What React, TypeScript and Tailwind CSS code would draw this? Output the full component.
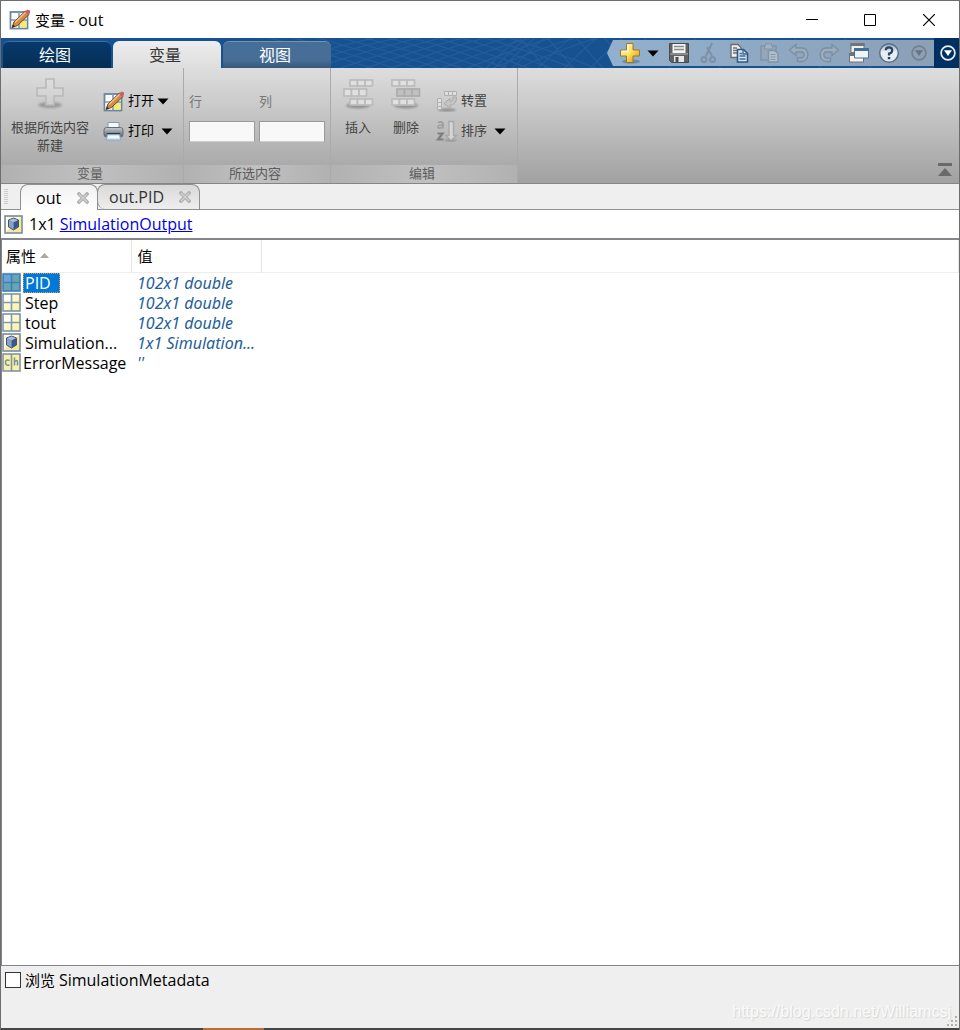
import React from "react";

const GridIcon = ({ selected = false }: { selected?: boolean }) => (
  <svg width="19" height="19" viewBox="0 0 19 19" aria-hidden="true">
    <defs>
      <linearGradient id="pane" x2="1" y2="1"><stop stopColor="#fffef6" /><stop offset="1" stopColor="#fbf19a" /></linearGradient>
    </defs>
    <rect x="1" y="1" width="17" height="17" fill={selected ? "#69a3b4" : "url(#pane)"} stroke={selected ? "#3c80b4" : "#7b94ad"} strokeWidth="1.600" />
    <rect x="2" y="2" width="7" height="7" fill={selected ? "#69a5d7" : "#fffef4"} />
    <path d="M9.500 1v17M1 9.500h17" stroke={selected ? "#3c80b4" : "#8299b0"} strokeWidth="1.600" />
  </svg>
);

const CubeIcon = () => (
  <svg width="19" height="19" viewBox="0 0 19 19" aria-hidden="true">
    <rect x="1" y="1" width="17" height="17" fill="#f7e999" stroke="#778da7" strokeWidth="1.600" />
    <path d="M2 17V2h15z" fill="#fffbdc" />
    <path d="M9.500 3l5 2v7l-5 3-5-3V5z" fill="#5f7fab" stroke="#3d5477" />
    <path d="M5 5.300l4.500-1.800L14 5.300 9.500 7.500z" fill="#a9bfdb" />
    <path d="M9.500 7.500L14 5.300v6.500l-4.500 2.700z" fill="#3b5988" />
    <path d="M5 5.600l4.500 2v6.900L5 11.800z" fill="#86a2c8" />
  </svg>
);

const CharIcon = () => (
  <svg width="19" height="19" viewBox="0 0 19 19" aria-hidden="true">
    <rect x="1" y="1" width="17" height="17" fill="#faf0a9" stroke="#8194a4" strokeWidth="1.600" />
    <path d="M9.500 1v17" stroke="#8194a4" strokeWidth="1.600" />
    <path d="M7.500 7.500Q3.500 6 3.500 9.500t4 2.500M12.500 4.500v8M12.500 9q3-3 3 0v3.500" fill="none" stroke="#74929b" strokeWidth="1.500" />
  </svg>
);

const VariableIcon = () => (
  <svg width="22" height="21" viewBox="0 0 22 21" aria-hidden="true">
    <rect x="1.500" y="3" width="17" height="16.500" fill="#fff" stroke="#6786ab" strokeWidth="1.800" />
    <path d="M11 11h6.600v7.600H11z" fill="#f8ec70" />
    <path d="M2.500 12h7.500v6.600H2.500zM11 4h6.600v7H11z" fill="#fbf8d4" />
    <path d="M10 3v16M2 11h16" stroke="#7f9ab9" strokeWidth="1.600" />
    <path d="M3 18.500l2-5.500L16.500 2 20 5.500 8.500 16.500z" fill="#d08a45" stroke="#70482a" />
    <path d="M6 13.500L17 3" stroke="#f4bf83" strokeWidth="1.600" />
    <path d="M15.800 2.700L18.500.5 21 1.500v2.500l-1.800 2z" fill="#c75f72" />
    <path d="M3 18.500l1-3 2 2z" fill="#33271f" />
  </svg>
);

const PrinterIcon = () => (
  <svg width="22" height="21" viewBox="0 0 22 21" aria-hidden="true">
    <defs>
      <linearGradient id="printer" x2="0" y2="1"><stop stopColor="#c9cdd2" /><stop offset=".4" stopColor="#9ba0a7" /><stop offset="1" stopColor="#545c67" /></linearGradient>
    </defs>
    <path d="M5 8V1.500h11V8" fill="#f4f9ff" stroke="#8b9aab" />
    <rect x="1" y="6.500" width="19" height="9.500" rx="2.500" fill="url(#printer)" stroke="#676d75" />
    <path d="M4 12h13v1.500H4z" fill="#2b333f" />
    <path d="M4.500 13.500h12l1.500 5.500H3z" fill="#cbe5f9" stroke="#8aa9c0" />
    <path d="M5 16h11" stroke="#fff" strokeWidth="1.500" />
  </svg>
);

const Caret = () => (
  <svg width="12" height="7" viewBox="0 0 12 7" aria-hidden="true"><path d="M.5.500h11L6 6.500z" fill="#000" /></svg>
);

const GrayPlusIcon = () => (
  <svg width="32" height="34" viewBox="0 0 32 34" aria-hidden="true">
    <defs>
      <linearGradient id="grayPlus" x2="0" y2="1"><stop stopColor="#dedede" /><stop offset="1" stopColor="#cccccc" /></linearGradient>
      <filter id="softPlus" x="-20%" y="-60%" width="140%" height="220%"><feGaussianBlur stdDeviation="1.200" /></filter>
    </defs>
    <ellipse cx="16" cy="29" rx="12" ry="3" fill="#8a8a8a" opacity=".75" filter="url(#softPlus)" />
    <path d="M12 3h8v9h9v8h-9v9h-8v-9H3v-8h9z" fill="url(#grayPlus)" stroke="#b9b9b9" strokeWidth="1.600" />
  </svg>
);

const RowsIcon = ({ remove = false }: { remove?: boolean }) => (
  <svg width="32" height="34" viewBox="0 0 32 34" aria-hidden="true">
    <defs><filter id="softRows" x="-20%" y="-60%" width="140%" height="220%"><feGaussianBlur stdDeviation="1.200" /></filter></defs>
    <ellipse cx="16" cy="29.500" rx="12" ry="3" fill="#858585" opacity=".8" filter="url(#softRows)" />
    {[[remove ? 2 : 8, 4], [remove ? 7 : 2, 13], [remove ? 2 : 8, 23]].map(([x, y], i) => (
      <g key={i} fill={remove && i === 1 ? "#c0c0c0" : "#e0e0e0"} stroke={remove && i === 1 ? "#acacac" : "#bbbbbb"} strokeWidth="1.700">
        <rect x={x} y={y} width="7.500" height={i === 1 ? 7 : 6} />
        <rect x={x + 7.5} y={y} width="7.500" height={i === 1 ? 7 : 6} />
        <rect x={x + 15} y={y} width="7.500" height={i === 1 ? 7 : 6} />
      </g>
    ))}
  </svg>
);

const TransposeIcon = () => (
  <svg width="22" height="22" viewBox="0 0 22 22" aria-hidden="true">
    <defs><filter id="softTranspose" x="-20%" y="-80%" width="140%" height="260%"><feGaussianBlur stdDeviation=".8" /></filter></defs>
    <ellipse cx="11" cy="20" rx="9" ry="1.500" fill="#868686" filter="url(#softTranspose)" />
    <g fill="#dfdfdf" stroke="#b0b0b0">
      <path d="M8.500 1.500h12v4h-12zM12.500 1.500v4M16.500 1.500v4M1.500 8.500h4v11h-4zM1.500 12.500h4M1.500 16.500h4" />
      <path d="M20.500 7c0 6-3 8-6.500 8v3l-6-4.500 6-5v3c2 0 3-1 3-4.500z" fill="#c4c4c4" stroke="#a9a9a9" />
    </g>
  </svg>
);

const SortIcon = () => (
  <svg width="22" height="22" viewBox="0 0 22 22" aria-hidden="true">
    <defs><filter id="softSort" x="-20%" y="-80%" width="140%" height="260%"><feGaussianBlur stdDeviation=".8" /></filter></defs>
    <ellipse cx="14.500" cy="20.500" rx="6" ry="1.200" fill="#858585" filter="url(#softSort)" />
    <path d="M2 2.500q5-1.500 5 1.500v4.500M7 5Q2 4.500 2 7t5 0" fill="none" stroke="#a0a0a0" strokeWidth="1.800" />
    <path d="M1.500 13.500h5l-4.500 6h5.500" fill="none" stroke="#7f7f7f" strokeWidth="2.200" />
    <path d="M13 1.500h4.500v14h3L15 20.500l-5-5h3z" fill="#d5d5d5" stroke="#a9a9a9" strokeWidth="1.400" />
  </svg>
);

const PlusIcon = () => (
  <svg width="22" height="22" viewBox="0 0 22 22" aria-hidden="true">
    <defs><linearGradient id="gold" x2="1" y2="1"><stop stopColor="#fff8c5" /><stop offset=".5" stopColor="#ffe257" /><stop offset="1" stopColor="#d38a14" /></linearGradient></defs>
    <ellipse cx="12" cy="19.500" rx="9" ry="2" fill="#49677d" opacity=".5" />
    <path d="M7.500 1.500H14V8h6.500v6H14v6.500H7.500V14h-6V8h6z" fill="url(#gold)" stroke="#a47526" />
    <path d="M9 3v6.500H3" fill="none" stroke="#fffce2" strokeWidth="1.500" />
  </svg>
);

const SaveIcon = () => (
  <svg width="22" height="22" viewBox="0 0 22 22" aria-hidden="true">
    <path d="M1.500 1.500h19v19h-17l-2-2z" fill="#606366" stroke="#484b4e" />
    <path d="M2 11h18v2H2z" fill="#898989" />
    <path d="M4.500 2h13v9h-13z" fill="#f3f3f3" />
    <path d="M6 4.500h10M6 7.500h10" stroke="#8c8c8c" strokeWidth="1.400" />
    <path d="M6 14h10v6H6z" fill="#e8e8e8" /><path d="M7.500 15h3v5h-3z" fill="#4d4d4d" />
  </svg>
);

const CutIcon = () => (
  <svg width="22" height="22" viewBox="0 0 22 22" fill="none" stroke="#7d90a5" strokeWidth="2" aria-hidden="true">
    <path d="M14 1L8 14M9 5l5 9" /><circle cx="6" cy="17.500" r="2.500" /><circle cx="14.500" cy="17.500" r="2.500" />
  </svg>
);

const CopyIcon = () => (
  <svg width="22" height="22" viewBox="0 0 22 22" aria-hidden="true">
    <path d="M3 2.500h7l3 3v10H3z" fill="#f0f0ea" stroke="#686d70" strokeWidth="1.400" />
    <path d="M5 6h4M5 8.500h6M5 11h6" stroke="#6d7378" strokeWidth="1.400" />
    <path d="M9.500 7.500h6l4 4v8.500h-10z" fill="#d5e8fa" stroke="#315781" strokeWidth="1.600" />
    <path d="M15 8v4h4M11.500 11.500h2.500M11.500 14h6M11.500 17h6" fill="none" stroke="#3f6997" strokeWidth="1.400" />
  </svg>
);

const PasteIcon = () => (
  <svg width="22" height="22" viewBox="0 0 22 22" aria-hidden="true">
    <path d="M3 4h15v14H3z" fill="#94a6b9" stroke="#8194a8" strokeWidth="1.600" />
    <path d="M7.500 4V2h6v2h1v3h-8V4z" fill="#a3b3c3" stroke="#8194a8" />
    <path d="M10.500 8.500h6l3.500 3V20h-9.500z" fill="#b0bfcd" stroke="#8194a8" strokeWidth="1.400" />
    <path d="M12.500 12.500h5M12.500 15h5M12.500 17.500h5" stroke="#8496a8" />
  </svg>
);

const UndoIcon = ({ redo = false }: { redo?: boolean }) => (
  <svg width="22" height="22" viewBox="0 0 22 22" aria-hidden="true">
    <g transform={redo ? "matrix(-1 0 0 1 22 0)" : undefined}>
      <path d="M8 2.500v3.500h6c8 0 8 13.500-1 13.500h-3.500v-3.500H13c4 0 4-6 1-6H8v3.500L1.500 8z" fill="#9cadbd" stroke="#7b8fa4" strokeWidth="1.400" />
    </g>
  </svg>
);

const WindowsIcon = () => (
  <svg width="22" height="22" viewBox="0 0 22 22" aria-hidden="true">
    <path d="M3 1.500h13v9H3z" fill="#eeeeec" stroke="#707375" /><path d="M2.500 2.500h14" stroke="#737373" strokeWidth="3" />
    <path d="M1.500 11.500h14v8.500h-14z" fill="#f5f5f3" stroke="#707375" /><path d="M1 12.500h15" stroke="#737373" strokeWidth="3" />
    <path d="M6.500 6.500h14v9.500h-14z" fill="#edf4fa" stroke="#517186" /><path d="M6 7.500h15" stroke="#417094" strokeWidth="3" />
  </svg>
);

const HelpIcon = () => (
  <svg width="22" height="22" viewBox="0 0 22 22" aria-hidden="true">
    <defs><linearGradient id="helpFill" x2="0" y2="1"><stop stopColor="#8fa7be" /><stop offset=".45" stopColor="#e9eff4" /><stop offset="1" stopColor="#e3eaf1" /></linearGradient></defs>
    <circle cx="11" cy="11" r="9.300" fill="url(#helpFill)" stroke="#58718b" strokeWidth="1.500" />
    <path d="M7.800 8.200Q7.800 5.300 11 5.300t3.200 2.900-3.200 3.300v2" fill="none" stroke="#2b465f" strokeWidth="2.200" /><path d="M9.800 15h2.500v2.200H9.800z" fill="#2b465f" />
  </svg>
);

const CircleDown = ({ light = false }: { light?: boolean }) => (
  <svg width="18" height="18" viewBox="0 0 18 18" aria-hidden="true">
    <circle cx="9" cy="9" r="6.900" fill="none" stroke={light ? "#e8edf3" : "#74808c"} strokeWidth="1.700" />
    <path d="M5 6.300h8L9 12z" fill={light ? "#fff" : "#68737e"} />
  </svg>
);

const CloseMark = () => (
  <svg width="12" height="12" viewBox="0 0 12 12" aria-hidden="true">
    <path d="M2 2l8 8M10 2l-8 8" stroke="#b0b0b0" strokeWidth="3.600" strokeLinecap="square" />
    <path d="M2 2l8 8M10 2l-8 8" stroke="#d0d0d0" strokeWidth="1.400" />
  </svg>
);

const BannerPattern = () => (
  <svg className="absolute inset-0 h-full w-full" viewBox="0 0 960 30" preserveAspectRatio="xMinYMin slice" aria-hidden="true">
    <g fill="none" stroke="#5b87b4" strokeWidth="1.200" opacity=".2">
      {Array.from({ length: 11 }, (_, i) => (
        <g key={i}>
          <path d={`M${240 + i * 26} 38Q${320 + i * 24} 10 ${410 + i * 21} -8`} />
          <path d={`M${240 + i * 24} -8Q${300 + i * 24} 8 ${390 + i * 22} 36`} />
        </g>
      ))}
      {[480, 488, 496, 506, 532, 558, 584].map((x) => <path key={x} d={`M${x} 36Q${x + 22} 12 ${x + 44} -5`} />)}
      {[515, 543, 572, 600, 640, 690, 740, 790, 840].map((x) => <path key={x} d={`M${x} -4l35 40`} />)}
    </g>
  </svg>
);

const quickActions: [string, React.ReactNode][] = [
  ["保存", <SaveIcon />], ["剪切", <CutIcon />], ["复制", <CopyIcon />], ["粘贴", <PasteIcon />],
  ["撤销", <UndoIcon />], ["重做", <UndoIcon redo />], ["切换窗口", <WindowsIcon />], ["帮助", <HelpIcon />], ["更多", <CircleDown />],
];

const rows = [
  { name: "PID", value: "102x1 double", icon: <GridIcon selected />, nameClass: "border border-dotted border-[#e49c50] bg-[#0078d7] pr-2 pl-px leading-[18px] text-white" },
  { name: "Step", value: "102x1 double", icon: <GridIcon />, nameClass: "pl-[2px]" },
  { name: "tout", value: "102x1 double", icon: <GridIcon />, nameClass: "pl-[2px]" },
  { name: "Simulation...", value: "1x1 Simulation...", icon: <CubeIcon />, nameClass: "pl-[2px]" },
  { name: "ErrorMessage", value: "''", icon: <CharIcon />, nameClass: "" },
];

function TitleBar() {
  return (
    <header className="flex h-[37px] shrink-0 items-center bg-white pl-2">
      <VariableIcon />
      <h1 className="ml-1 text-[15px]">变量 <span className="text-base">- out</span></h1>
      <div className="ml-auto flex h-full">
        <button aria-label="最小化" className="flex w-[58px] items-center justify-center"><svg width="12" height="12"><path d="M0 5.500h12" stroke="#000" /></svg></button>
        <button aria-label="最大化" className="flex w-[58px] items-center justify-center"><svg width="12" height="12"><path d="M.5.500h11v11H.5z" fill="none" stroke="#000" /></svg></button>
        <button aria-label="关闭" className="flex w-[60px] items-center justify-center"><svg width="12" height="12"><path d="M0 0l12 12M12 0L0 12" stroke="#000" strokeWidth="1.200" /></svg></button>
      </div>
    </header>
  );
}

function Banner() {
  return (
    <div className="relative flex h-[30px] shrink-0 bg-[#165291]">
      <BannerPattern />
      <nav className="relative flex gap-[2px] pt-[3px] pl-[2px] text-base">
        <button className="w-[108px] rounded-t-md border-t border-[#416f98] bg-linear-to-b from-[#07396c] to-[#062e55] pr-1 text-white">绘图</button>
        <button className="w-[108px] rounded-t-md bg-linear-to-b from-[#ededed] to-[#dedede] pr-1 text-[#333]">变量</button>
        <button className="w-[108px] rounded-t-md border-t border-[#7792ad] bg-linear-to-b from-[#476e97] from-70% to-[#365778] pr-1 text-white">视图</button>
      </nav>
      <div className="relative ml-auto flex">
        <div className="my-[2px] flex bg-linear-to-r from-[#92b0ce] to-[#8ca0b7] pl-2 [clip-path:polygon(0_50%,6px_0,100%_0,100%_100%,6px_100%)]">
          <button aria-label="新建" className="flex w-[30px] items-center justify-center"><PlusIcon /></button>
          <button aria-label="新建选项" className="flex w-[19px] items-center pl-[2px]"><Caret /></button>
          {quickActions.map(([label, icon]) => (
            <button key={label} aria-label={label} className="flex w-[30px] items-center justify-center">{icon}</button>
          ))}
        </div>
        <button aria-label="工具条选项" className="flex w-[25px] items-center justify-center bg-[#002f61] pl-[2px]"><CircleDown light /></button>
      </div>
    </div>
  );
}

function RibbonGroup({ title, className, children }: { title: string; className: string; children: React.ReactNode }) {
  return (
    <section className={`flex shrink-0 flex-col border-r border-[#aaa] ${className}`}>
      <div className="flex flex-1">{children}</div>
      <h2 className="h-[18px] bg-linear-to-r from-[#b1b1b1] via-[#c0c0c0] to-[#b1b1b1] pr-1 text-center text-[13px] leading-4 text-[#5c5c5c]">{title}</h2>
    </section>
  );
}

function Ribbon() {
  return (
    <div className="flex h-[116px] shrink-0 border-b border-[#858585] bg-linear-to-b from-[#dedede] to-[#a1a1a1] text-[13px]">
      <RibbonGroup title="变量" className="w-[183px]">
        <button className="flex w-[98px] flex-col items-center pt-2 leading-[18px] text-[#444]">
          <GrayPlusIcon /><span className="mt-2">根据所选内容<br />新建</span>
        </button>
        <div className="flex flex-col gap-[2px] pt-[19px] pl-1">
          <button className="flex h-7 items-center gap-[3px]"><VariableIcon /><span>打开</span><Caret /></button>
          <button className="flex h-7 items-center gap-[3px]"><PrinterIcon /><span className="mr-1">打印</span><Caret /></button>
        </div>
      </RibbonGroup>
      <RibbonGroup title="所选内容" className="w-[147px]">
        <div className="flex gap-1 pt-[23px] pl-[5px] text-[#777]">
          <label className="flex w-[66px] flex-col gap-[10px] leading-5">行<input className="h-[21px] w-full border border-[#999] border-b-[#ccc] bg-[#f8f8f8] px-1" /></label>
          <label className="flex w-[66px] flex-col gap-[10px] leading-5">列<input className="h-[21px] w-full border border-[#999] border-b-[#ccc] bg-[#f8f8f8] px-1" /></label>
        </div>
      </RibbonGroup>
      <RibbonGroup title="编辑" className="w-[187px]">
        <div className="flex pl-[3px] text-[#444]">
          <button className="flex w-12 flex-col items-center pt-2 leading-[18px]"><RowsIcon /><span className="mt-2">插入</span></button>
          <button className="flex w-12 flex-col items-center pt-2 leading-[18px]"><RowsIcon remove /><span className="mt-2">删除</span></button>
          <div className="flex flex-col gap-[2px] pt-[19px] pl-[6px]">
            <button className="flex h-7 items-center gap-[3px]"><TransposeIcon /><span>转置</span></button>
            <button className="flex h-7 items-center gap-[3px]"><SortIcon /><span className="mr-1">排序</span><Caret /></button>
          </div>
        </div>
      </RibbonGroup>
      <button aria-label="折叠工具条" className="mt-auto mr-[7px] mb-[6px] ml-auto">
        <svg width="14" height="14"><path d="M0 0h14v3H0zM7 5l7 8H0z" fill="#686a68" /></svg>
      </button>
    </div>
  );
}

function DocumentTabs() {
  return (
    <nav className="flex h-[26px] shrink-0 border-b border-[#909090] bg-[#efefef] text-base">
      <div className="flex w-[19px] items-center pl-[3px]"><svg width="4" height="16"><path d="M1 0v16M3 0v16" stroke="#aaa" strokeDasharray="1 1" /></svg></div>
      <div className="-mb-px flex w-[78px] items-center rounded-t-lg border border-b-0 border-[#909090] bg-linear-to-b from-[#f1f1f1] to-white pl-[15px]">
        <button>out</button><button aria-label="关闭 out" className="mr-2 ml-auto"><CloseMark /></button>
      </div>
      <div className="-ml-px flex w-[103px] items-center rounded-t-lg rounded-bl-lg border border-b-0 border-[#909090] bg-linear-to-b from-[#d9d9d9] to-[#eee] pl-[11px] text-[#333]">
        <button>out.PID</button><button aria-label="关闭 out.PID" className="mr-2 ml-auto"><CloseMark /></button>
      </div>
    </nav>
  );
}

export default function App() {
  return (
    <div className="flex min-h-screen flex-col border-x border-t border-[#6d6d6d] bg-[#efefef] text-black [font-family:'Open_Sans','Noto_Sans_CJK_SC',sans-serif]">
      <TitleBar />
      <Banner />
      <Ribbon />
      <DocumentTabs />
      <div className="flex h-7 shrink-0 items-center bg-white pl-[3px] text-base">
        <CubeIcon /><span className="mr-1 ml-[6px]">1x1</span><a href="#simulation-output" className="text-[#0000e8] underline">SimulationOutput</a>
      </div>
      <main id="simulation-output" className="flex-1 border-t-2 border-b border-l border-[#85858f] bg-white">
        <table className="w-full table-fixed border-collapse text-base">
          <colgroup><col className="w-[129px]" /><col className="w-[130px]" /><col /></colgroup>
          <thead>
            <tr className="h-8 border-b border-[#eee] text-left text-[15px]">
              <th className="border-r border-[#e5e5e5] p-0 pl-1 font-normal"><div className="flex items-center gap-1">属性<svg width="9" height="5" aria-hidden="true"><path d="M0 5l4.500-5L9 5z" fill="#aaa99d" /></svg></div></th>
              <th className="border-r border-[#e5e5e5] p-0 pl-[6px] font-normal">值</th>
              <th className="border-r border-[#e5e5e5] p-0" aria-label="空列"></th>
            </tr>
          </thead>
          <tbody>
            {rows.map((row) => (
              <tr key={row.name} className="h-5">
                <td className="p-0">
                  <div className="flex h-5 items-center gap-[2px] leading-5 whitespace-nowrap">
                    {row.icon}
                    <span className={row.nameClass}>{row.name}</span>
                  </div>
                </td>
                <td className="p-0 pl-[6px] leading-5 whitespace-nowrap text-[#1f609c] italic [font-family:'Noto_Sans',sans-serif]">{row.value}</td>
                <td className="p-0"></td>
              </tr>
            ))}
          </tbody>
        </table>
      </main>
      <footer className="relative h-[62px] shrink-0">
        <label className="flex items-center gap-1 pt-[2px] pl-1 text-[15px] leading-6">
          <input type="checkbox" className="size-4 appearance-none border border-[#333] bg-white checked:bg-[#0078d7]" />
          <span>浏览 <span className="text-base leading-6">SimulationMetadata</span></span>
        </label>
        <span className="absolute right-2 bottom-1 text-base text-[#fafafa] [font-family:'Liberation_Sans',sans-serif] [text-shadow:1px_1px_1px_#d4d4d4]">https://blog.csdn.net/Williamcsj</span>
        <svg className="absolute right-px bottom-px" width="11" height="11" aria-hidden="true"><path d="M8 0h2v2H8zM4 4h2v2H4zM8 4h2v2H8zM0 8h2v2H0zM4 8h2v2H4zM8 8h2v2H8z" fill="#b5b2a2" /></svg>
      </footer>
      <div className="h-[2px] shrink-0 bg-[#454545]"><div className="ml-[202px] h-full w-[61px] bg-[#b47036]" /></div>
    </div>
  );
}
